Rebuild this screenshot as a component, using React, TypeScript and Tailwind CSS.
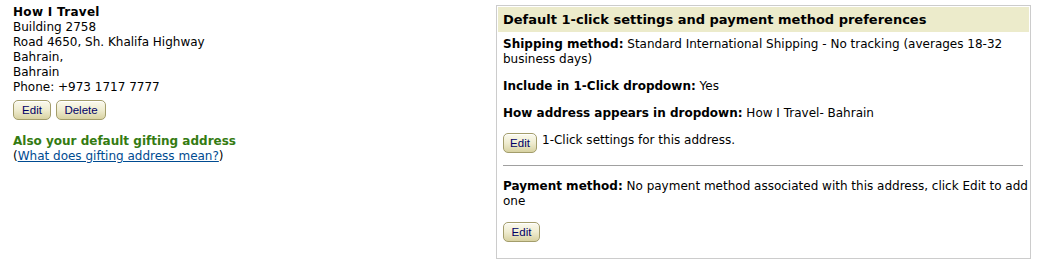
import React from "react";

function Btn({ label, w }: { label: string; w: string }) {
  return (
    <button
      className={`${w} h-[20px] rounded-[5px] border border-[#a39d6b] bg-gradient-to-b from-[#fbfaee] via-[#efecd0] to-[#d8d2a2] shadow-[inset_0_1px_0_#ffffff] text-[11.5px] leading-[18px] text-[#000066] font-['Liberation_Sans',Arial,sans-serif] text-center`}
    >
      {label}
    </button>
  );
}

export default function App() {
  return (
    <div className="w-[1042px] h-[271px] bg-white font-['DejaVu_Sans',Verdana,sans-serif] text-[12px] leading-[15px] text-black">
      <div className="flex pt-[5px] pl-[13px]">
        <div className="w-[483px] shrink-0">
          <div className="font-bold tracking-[0.3px]">How I Travel</div>
          <div>Building 2758</div>
          <div>Road 4650, Sh. Khalifa Highway</div>
          <div>Bahrain,</div>
          <div>Bahrain</div>
          <div>Phone: +973 1717 7777</div>
          <div className="flex gap-[5px] mt-[5px]">
            <Btn label="Edit" w="w-[38px]" />
            <Btn label="Delete" w="w-[50px]" />
          </div>
          <div className="mt-[14px] font-bold text-[#347b12]">Also your default gifting address</div>
          <div>
            (<a href="#" className="text-[#004b91] underline">What does gifting address mean?</a>)
          </div>
        </div>
        <div className="w-[535px] h-[254px] shrink-0 border border-[#cccccc] p-[1px]">
          <div className="h-[25px] bg-[#ecebcb] pl-[5px] flex items-center font-bold text-[13px]">
            Default 1-click settings and payment method preferences
          </div>
          <div className="pl-[5px] pt-[5px]">
            <p className="pr-[5px]">
              <span className="font-bold">Shipping method:</span> Standard International Shipping - No tracking (averages 18-32 business days)
            </p>
            <p className="mt-[12px]">
              <span className="font-bold">Include in 1-Click dropdown:</span> Yes
            </p>
            <p className="mt-[12px]">
              <span className="font-bold">How address appears in dropdown:</span> How I Travel- Bahrain
            </p>
            <div className="mt-[12px] flex items-start gap-[5px]">
              <Btn label="Edit" w="w-[34px]" />
              <span className="leading-[15px]">1-Click settings for this address.</span>
            </div>
            <div className="mt-[12px] h-[1px] bg-[#a0a0a0] mr-[6px]" />
            <p className="mt-[13px]">
              <span className="font-bold">Payment method:</span> No payment method associated with this address, click Edit to add one
            </p>
            <div className="mt-[13px]">
              <Btn label="Edit" w="w-[37px]" />
            </div>
          </div>
        </div>
      </div>
    </div>
  );
}
